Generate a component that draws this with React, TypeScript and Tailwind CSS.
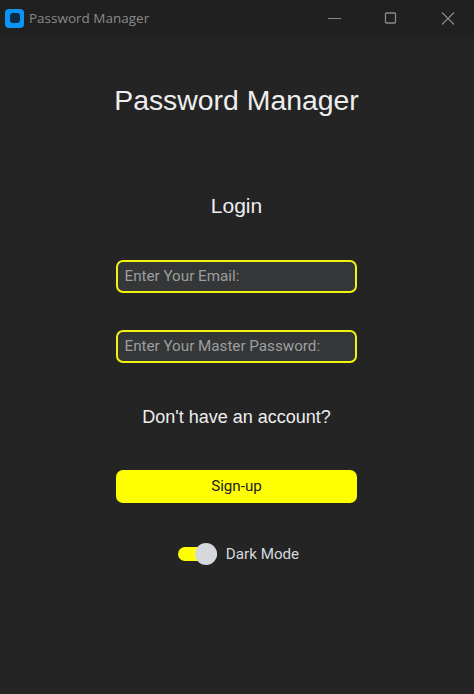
export default function App() {
  return (
    <div className="flex h-[694px] w-[474px] flex-col overflow-hidden bg-[#242424] font-['Roboto',sans-serif]">
      {/* title bar */}
      <div className="flex h-9 shrink-0 items-center bg-[#202020] pl-[5px]">
        <div className="flex h-[19px] w-[19px] items-center justify-center rounded-[4px] bg-[#0a94f5]">
          <div className="h-[10px] w-[10px] rounded-[3px] bg-[#0e2a42]" />
        </div>
        <span className="ml-[5px] font-['Open_Sans',sans-serif] text-[13.5px] text-[#8a8a8a]">Password Manager</span>
        <div className="ml-auto flex items-center text-[#8a8a8a]">
          <svg width="56" height="16" viewBox="0 0 56 16" fill="none" stroke="currentColor" strokeWidth="1">
            <path d="M22 8.5H35" />
          </svg>
          <svg width="56" height="16" viewBox="0 0 56 16" fill="none" stroke="currentColor" strokeWidth="1.3">
            <rect x="23.5" y="3" width="10" height="10" rx="1" />
          </svg>
          <svg width="56" height="16" viewBox="0 0 56 16" fill="none" stroke="currentColor" strokeWidth="1.1">
            <path d="M24 2.5L36 14.5M36 2.5L24 14.5" />
          </svg>
        </div>
      </div>

      <div className="flex flex-col items-center pr-[1px]">
        <h1 className="mt-[45px] font-['Liberation_Sans',sans-serif] text-[28.4px] leading-[38px] text-[#eeeeee]">Password Manager</h1>
        <h2 className="mt-[73px] font-['Liberation_Sans',sans-serif] text-[21px] leading-[28px] text-[#eeeeee]">Login</h2>

        <input
          placeholder="Enter Your Email:"
          className="mt-[40px] h-[33px] w-[241px] rounded-[7px] border-[2.5px] border-[#f2f20f] bg-[#343638] px-[6.5px] pb-[1px] text-[15.2px] text-white outline-none placeholder:text-[#9e9e9e]"
        />
        <input
          placeholder="Enter Your Master Password:"
          className="mt-[37px] h-[33px] w-[241px] rounded-[7px] border-[2.5px] border-[#f2f20f] bg-[#343638] px-[6.5px] pb-[1px] text-[15.2px] text-white outline-none placeholder:text-[#9e9e9e]"
        />

        <p className="mt-[43px] font-['Liberation_Sans',sans-serif] text-[18px] leading-[22px] text-[#eeeeee]">Don't have an account?</p>

        <button className="mt-[42px] h-[33px] w-[241px] rounded-[7px] bg-[#ffff00] text-[15.2px] text-[#222222]">Sign-up</button>

        <div className="ml-[4px] mt-[40px] flex items-center">
          <div className="relative h-[14px] w-[39px] rounded-full bg-[#ffff00]">
            <div className="absolute right-0 top-[-4px] h-[22px] w-[22px] rounded-full bg-[#d5d8dc]" />
          </div>
          <span className="ml-[9px] text-[15.2px] text-[#d5d8dc]">Dark Mode</span>
        </div>
      </div>
    </div>
  )
}
